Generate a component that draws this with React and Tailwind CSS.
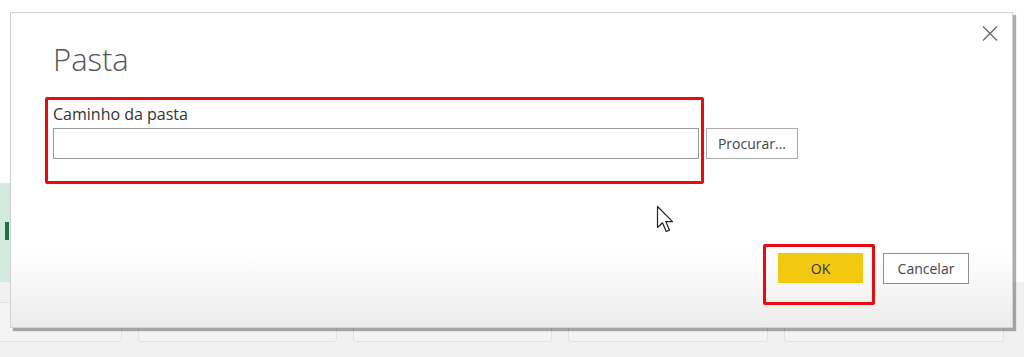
import React from 'react';

const font = { fontFamily: '"Open Sans", "Noto Sans", sans-serif' };

function Cursor() {
  return (
    <svg width="19" height="29" viewBox="0 0 19 29" className="absolute left-[645px] top-[192px]">
      <path
        d="M1.5 1.5 L1.5 22.5 L6.5 17.8 L10.2 26.5 L13.4 25.1 L9.8 16.6 L16.5 16.6 Z"
        fill="#ffffff"
        stroke="#222222"
        strokeWidth="1.2"
        strokeLinejoin="round"
      />
    </svg>
  );
}

function Background() {
  return (
    <div className="absolute inset-0 flex flex-col">
      <div className="h-[183px] bg-white" />
      <div className="flex h-[99px] bg-white">
        <div className="w-[120px] bg-[#d3eadf] pt-[39px] pl-[5px]">
          <div className="h-[18px] w-[4px] bg-[#1f7244]" />
        </div>
      </div>
      <div className="flex flex-1 flex-col bg-[#f1f1f1]">
        <div className="pt-[22px] text-[11px] leading-[12px] text-[#555]">la</div>
        <div className="mt-[-14px] flex gap-[16px]">
          <div className="-ml-[80px] h-[40px] w-[202px] rounded-b-[3px] border border-[#e2e2e2] bg-[#f4f4f4]" />
          <div className="h-[40px] w-[199px] rounded-b-[3px] border border-[#e2e2e2] bg-[#f4f4f4]" />
          <div className="h-[40px] w-[199px] rounded-b-[3px] border border-[#e2e2e2] bg-[#f4f4f4]" />
          <div className="h-[40px] w-[200px] rounded-b-[3px] border border-[#e2e2e2] bg-[#f4f4f4]" />
          <div className="h-[40px] w-[220px] rounded-b-[3px] border border-[#e2e2e2] bg-[#f4f4f4]" />
        </div>
      </div>
    </div>
  );
}

export default function App() {
  return (
    <div className="relative h-[357px] w-[1024px] overflow-hidden bg-white" style={font}>
      <Background />

      <div className="absolute left-[10px] top-[12px] h-[316px] w-[1003px] border border-[#d2d2d2] bg-linear-to-b from-white from-[76%] to-[#ececec] shadow-[3px_3px_1px_rgba(0,0,0,0.32)]">
        <button className="absolute left-[970px] top-[12px] flex h-[16px] w-[18px] items-center justify-center">
          <svg width="16" height="15" viewBox="0 0 16 15">
            <path d="M1 0.5 L15 14.5 M15 0.5 L1 14.5" stroke="#6a6a6a" strokeWidth="1.4" />
          </svg>
        </button>

        <div className="flex h-full flex-col pl-[42px] pr-[43px]">
          <h1 className="mt-[26px] text-[31px] leading-[40px] font-light text-[#555]">Pasta</h1>

          <label className="mt-[25px] text-[16px] leading-[20px] text-[#333]">Caminho da pasta</label>
          <div className="mt-[4px] flex gap-[7px]">
            <input
              type="text"
              className="h-[31px] w-[646px] border border-[#9c9c9c] bg-white px-2 text-[14px] outline-none"
            />
            <button className="h-[31px] w-[92px] border border-[#ababab] bg-white text-[14px] text-[#444]">
              Procurar...
            </button>
          </div>

          <div className="mt-[94px] flex justify-end gap-[20px]">
            <button className="h-[30px] w-[85px] bg-[#f2c811] text-[14px] text-[#333]">OK</button>
            <button className="h-[31px] w-[86px] border border-[#8f8f8f] bg-white text-[14px] text-[#444]">
              Cancelar
            </button>
          </div>
        </div>

        {/* annotation boxes */}
        <div className="pointer-events-none absolute left-[34px] top-[84px] h-[87px] w-[659px] rounded-[2px] border-[3px] border-[#ea0a12]" />
        <div className="pointer-events-none absolute left-[752px] top-[231px] h-[61px] w-[112px] rounded-[2px] border-[3px] border-[#ea0a12]" />

        <Cursor />
      </div>
    </div>
  );
}
